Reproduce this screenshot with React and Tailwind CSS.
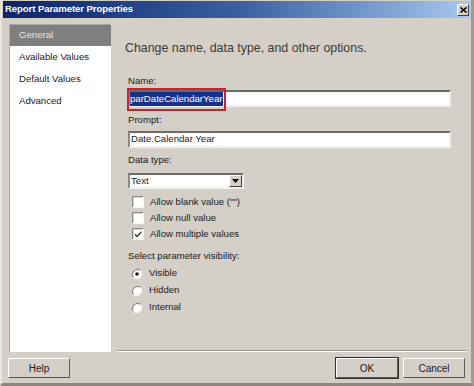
import React from "react";

function CheckBox({ checked }) {
  return (
    <svg width="12" height="12" viewBox="0 0 12 12" className="shrink-0">
      <rect x="0" y="0" width="12" height="12" fill="#ffffff" />
      <path d="M0.5 11.5 V0.5 H11.5" stroke="#8a8a8a" fill="none" />
      <path d="M1.5 10.5 V1.5 H10.5" stroke="#d0d0d0" fill="none" />
      <path d="M0.5 11.5 H11.5 V0.5" stroke="#f4f4f4" fill="none" />
      {checked && (
        <path d="M3 5.5 L5 7.5 L9.5 3 L9.5 4.8 L5 9.2 L3 7.2 Z" fill="#202020" />
      )}
    </svg>
  );
}

function Radio({ checked }) {
  return (
    <svg width="12" height="12" viewBox="0 0 12 12" className="shrink-0">
      <circle cx="6" cy="6" r="5" fill="#ffffff" />
      <path d="M2.5 9.5 A5 5 0 0 1 9.5 2.5" stroke="#8a8a8a" strokeWidth="1.2" fill="none" />
      <path d="M9.5 2.5 A5 5 0 0 1 2.5 9.5" stroke="#f2f2f2" strokeWidth="1.2" fill="none" />
      {checked && <circle cx="6" cy="6" r="1.8" fill="#1a1a1a" />}
    </svg>
  );
}

function Button({ label, isDefault }) {
  return (
    <div
      className={
        "w-[62px] h-[20px] flex items-center justify-center bg-[#d4d0c8] border border-t-white border-l-white border-r-[#5a5a5a] border-b-[#5a5a5a] text-[10px] text-[#1a1a1a] " +
        (isDefault ? "outline outline-1 outline-[#303030]" : "")
      }
    >
      {label}
    </div>
  );
}

export default function App() {
  const navItems = ["Available Values", "Default Values", "Advanced"];

  return (
    <div
      className="w-[474px] h-[386px] bg-[#d4d0c8] flex flex-col overflow-hidden border-l-2 border-l-[#e8e6e0] border-r-[3px] border-r-[#a09c94] border-b-[3px] border-b-[#8c8880]"
      style={{ fontFamily: '"Liberation Sans", Arial, sans-serif' }}
    >
      {/* title bar */}
      <div className="h-[17px] mt-[1px] ml-[1px] flex items-center justify-between bg-linear-to-r from-[#0a246a] via-[#3a5f9e] to-[#a6caf0]">
        <span className="pl-[2px] text-white font-bold text-[9.6px] tracking-[-0.1px]">
          Report Parameter Properties
        </span>
        <div className="mr-[2px] w-[12px] h-[12px] bg-[#d4d0c8] border border-t-white border-l-white border-r-[#404040] border-b-[#404040] flex items-center justify-center">
          <svg width="7" height="6" viewBox="0 0 7 6">
            <path d="M0.5 0.5 L6.5 5.5 M6.5 0.5 L0.5 5.5" stroke="#000" strokeWidth="1.6" />
          </svg>
        </div>
      </div>

      {/* body */}
      <div className="flex flex-row mt-[6px] h-[328px]">
        <div className="ml-[7px] w-[102px] h-full bg-white border-l border-t border-[#a8a8a8] flex flex-col text-[9.6px] text-[#1a1a1a]">
          <div className="h-[21px] bg-[#7f7f7f] text-[#e6e6e6] pl-[9px] flex items-center">General</div>
          {navItems.map((item) => (
            <div key={item} className="h-[22px] pl-[9px] flex items-center">
              {item}
            </div>
          ))}
        </div>

        <div className="flex-1 flex flex-col">
          <div className="pl-[14px] pt-[16px] h-[32px] leading-[16px] text-[12.4px] text-[#3a3a3a]">
            Change name, data type, and other options.
          </div>

          <div className="pl-[17px] flex flex-col text-[9.6px] text-[#1a1a1a]">
            <div className="mt-[19px] h-[12px] leading-[12px]">Name:</div>
            <div className="relative mt-[3px] w-[323px] h-[17px] bg-white border-2 border-t-[#6a6a6a] border-l-[#8a8a8a] border-r-[#f0f0f0] border-b-[#f0f0f0] flex items-center">
              <span className="bg-[#17318a] text-white h-[14px] leading-[14px] pr-[1px]">parDateCalendarYear</span>
              <div className="absolute left-[-3px] top-[-4px] w-[99px] h-[23px] border-2 border-[#c4262e]" />
            </div>

            <div className="mt-[7px] h-[12px] leading-[12px]">Prompt:</div>
            <div className="mt-[5px] w-[323px] h-[17px] bg-white border-2 border-t-[#6a6a6a] border-l-[#8a8a8a] border-r-[#f0f0f0] border-b-[#f0f0f0] flex items-center pl-[1px]">
              Date.Calendar Year
            </div>

            <div className="mt-[6px] h-[12px] leading-[12px]">Data type:</div>
            <div className="mt-[7px] w-[116px] h-[16px] bg-white border-2 border-t-[#6a6a6a] border-l-[#8a8a8a] border-r-[#f0f0f0] border-b-[#f0f0f0] flex items-center justify-between pl-[1px]">
              <span>Text</span>
              <div className="w-[13px] h-[12px] bg-[#d4d0c8] border border-t-white border-l-white border-r-[#404040] border-b-[#404040] flex items-center justify-center">
                <svg width="7" height="4" viewBox="0 0 7 4">
                  <path d="M0 0 H7 L3.5 4 Z" fill="#000" />
                </svg>
              </div>
            </div>

            <div className="mt-[5px] flex flex-col">
              {[
                ["Allow blank value (\"\")", false],
                ["Allow null value", false],
                ["Allow multiple values", true],
              ].map(([label, checked]) => (
                <div key={label} className="h-[16px] flex items-center pl-[4px] gap-[6px]">
                  <CheckBox checked={checked} />
                  <span>{label}</span>
                </div>
              ))}
            </div>

            <div className="mt-[8px] h-[12px] leading-[12px]">Select parameter visibility:</div>
            <div className="mt-[3px] flex flex-col">
              {[
                ["Visible", true],
                ["Hidden", false],
                ["Internal", false],
              ].map(([label, checked]) => (
                <div key={label} className="h-[17px] flex items-center pl-[3px] gap-[6px]">
                  <Radio checked={checked} />
                  <span>{label}</span>
                </div>
              ))}
            </div>
          </div>

          <div className="flex-1" />
          <div className="ml-[6px] mr-[4px] h-[2px] border-t border-t-[#9a968e] border-b border-b-white" />
        </div>
      </div>

      {/* buttons */}
      <div className="mt-[6px] flex flex-row items-center pl-[6px] pr-[6px]">
        <Button label="Help" />
        <div className="flex-1" />
        <div className="flex flex-row gap-[5px]">
          <Button label="OK" isDefault />
          <Button label="Cancel" />
        </div>
      </div>
    </div>
  );
}
